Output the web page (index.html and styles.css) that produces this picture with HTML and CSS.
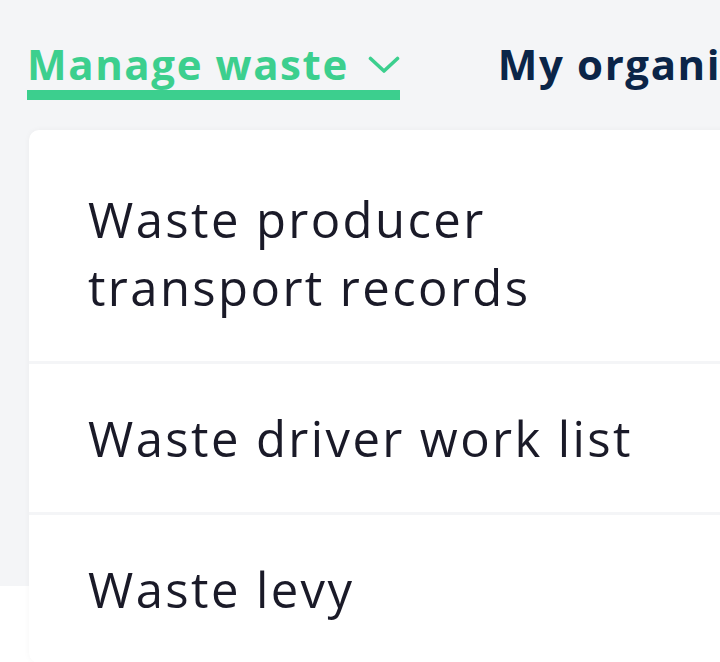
FILE: index.html
```html
<!DOCTYPE html>
<html lang="en">
<head>
<meta charset="utf-8">
<title>Manage waste</title>
<link rel="stylesheet" href="styles.css">
</head>
<body>
<header class="topbar">
  <nav class="nav">
    <a class="nav-item active" href="#">Manage waste
      <svg class="chev" viewBox="0 0 32 18" width="32" height="18" aria-hidden="true"><path d="M2.5 2.5 L16 15 L29.5 2.5" fill="none" stroke="currentColor" stroke-width="3.6" stroke-linecap="round" stroke-linejoin="round"/></svg>
    </a>
    <a class="nav-item" href="#">My organisation</a>
  </nav>
</header>
<main class="page"></main>
<ul class="menu">
  <li class="menu-item">Waste producer<br>transport records</li>
  <li class="menu-item">Waste driver work list</li>
  <li class="menu-item">Waste levy</li>
</ul>
</body>
</html>
```

FILE: styles.css
```css
html, body { margin: 0; padding: 0; }
body {
  width: 720px;
  height: 662px;
  overflow: hidden;
  position: relative;
  background: #ffffff;
  font-family: "Open Sans", "Noto Sans", sans-serif;
}
.topbar {
  background: #f4f5f7;
  height: 586px;
}
.nav {
  display: flex;
  gap: 98px;
  padding: 40px 0 0 27px;
  white-space: nowrap;
}
.nav-item {
  display: flex;
  align-items: center;
  gap: 19px;
  font-size: 42px;
  letter-spacing: 1.6px;
  font-weight: 700;
  color: #0b2548;
  text-decoration: none;
  line-height: 48px;
  padding-bottom: 2px;
  border-bottom: 10px solid transparent;
}
.nav-item.active {
  color: #3ccf8e;
  border-bottom-color: #3ccf8e;
}
.chev { margin-top: 2px; }
.menu {
  position: absolute;
  left: 29px;
  top: 130px;
  width: 740px;
  margin: 0;
  padding: 15px 0 0;
  list-style: none;
  background: #ffffff;
  border-radius: 10px;
  box-shadow: 0 0 6px rgba(0, 0, 0, 0.04);
}
.menu-item {
  padding: 40px 0 40px 59px;
  font-size: 49px;
  letter-spacing: 2.4px;
  line-height: 68px;
  font-weight: 400;
  color: #1a1a28;
  border-bottom: 3px solid #f4f5f7;
}
.menu-item:last-child { border-bottom: 0; }
```
